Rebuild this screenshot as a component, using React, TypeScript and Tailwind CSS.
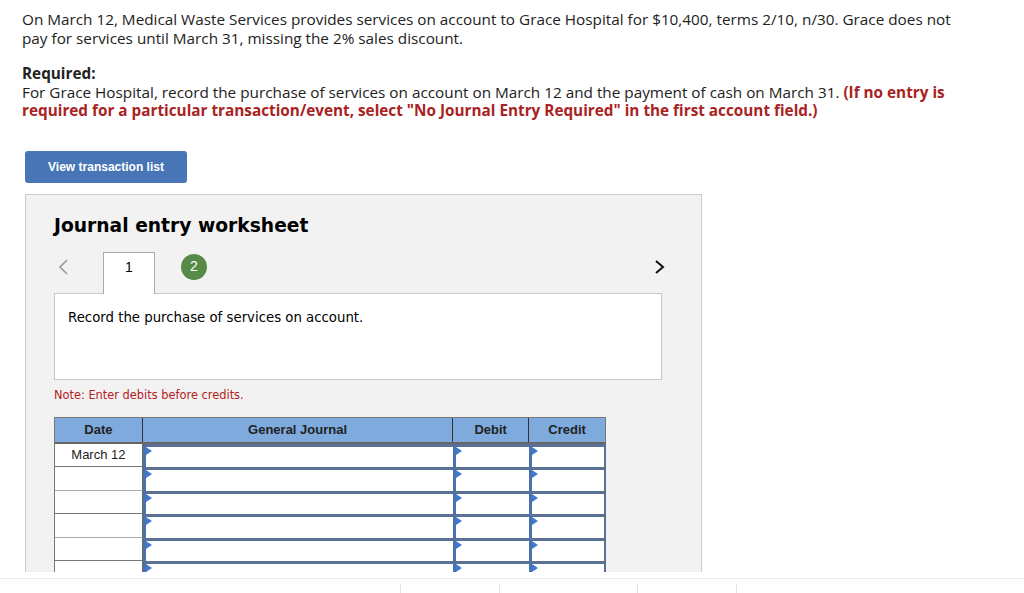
import React from "react";

const Marker = () => (
  <svg className="absolute left-0 top-0" width="6" height="8" viewBox="0 0 6 8">
    <polygon points="0,0 6,4 0,8" fill="#3f7ad0" />
  </svg>
);

const InputCell = ({ w }: { w: string }) => (
  <div className={`${w} relative h-full border-t-[3px] border-l-[3px] border-t-[#5a7094] border-l-[#4a72ad] bg-white`}>
    <Marker />
  </div>
);

export default function App() {
  const rows = ["March 12", "", "", "", "", ""];
  return (
    <div className="w-[1024px] h-[593px] overflow-hidden bg-white" style={{ fontFamily: "Lato, 'Liberation Sans', sans-serif" }}>
      <div className="h-[572px] overflow-hidden">
        <div className="pl-[22px] pt-[10px] w-[980px] text-[15.3px] leading-[18.5px] text-[#222]" style={{ fontFamily: "'Open Sans', 'Liberation Sans', sans-serif" }}>
          <p>
            On March 12, Medical Waste Services provides services on account to Grace Hospital for $10,400, terms 2/10, n/30. Grace does not pay for services until March 31, missing the 2% sales discount.
          </p>
          <p className="mt-[17px] font-bold">Required:</p>
          <p>
            For Grace Hospital, record the purchase of services on account on March 12 and the payment of cash on March 31.{" "}
            <span className="font-bold text-[#a8231f]">
              (If no entry is required for a particular transaction/event, select "No Journal Entry Required" in the first account field.)
            </span>
          </p>
        </div>

        <div className="pl-[25px] mt-[31px]">
          <button className="w-[162px] h-[32px] rounded-[3px] bg-[#4775b5] text-white text-[12px] font-bold" style={{ fontFamily: "'Liberation Sans', Arial, sans-serif" }}>
            View transaction list
          </button>
        </div>

        <div className="ml-[25px] mt-[11px] w-[677px] h-[400px] bg-[#f2f2f2] border border-[#cccccc] pl-[28px] pr-[39px]" style={{ fontFamily: "'DejaVu Sans', Verdana, sans-serif" }}>
          <h2 className="pt-[19px] text-[18.7px] font-bold text-black leading-[24px]">Journal entry worksheet</h2>

          <div className="mt-[14px] flex items-start h-[41px] relative">
            <div className="w-[49px] h-[30px] flex items-center pl-[3px]">
              <svg width="12" height="16" viewBox="0 0 12 16"><polyline points="10,1 3,8 10,15" fill="none" stroke="#9a9a9a" strokeWidth="1.6" /></svg>
            </div>
            <div className="relative z-10 w-[52px] h-[42px] bg-white border border-b-0 border-[#aaaaaa] flex justify-center pt-[6px] text-[14px] leading-[16px] text-black" style={{ fontFamily: "'Liberation Sans', Arial, sans-serif" }}>
              1
            </div>
            <div className="h-[30px] flex items-center ml-[26px]">
              <div className="w-[26px] h-[26px] rounded-full bg-[#578a47] text-white text-[14px] flex items-center justify-center" style={{ fontFamily: "'Liberation Sans', Arial, sans-serif" }}>
                2
              </div>
            </div>
            <div className="flex-1" />
            <div className="h-[30px] flex items-center -mr-[4px]">
              <svg width="12" height="16" viewBox="0 0 12 16"><polyline points="2,2 9,8 2,14" fill="none" stroke="#111" strokeWidth="2" /></svg>
            </div>
          </div>

          <div className="w-[608px] h-[87px] bg-white border border-[#c8c8c8] pl-[13px] pt-[14px] text-[13.3px] text-black">
            Record the purchase of services on account.
          </div>

          <p className="mt-[7px] text-[11.4px] text-[#b22222]">Note: Enter debits before credits.</p>

          <div className="mt-[13px] w-[552px] border-l border-t border-[#777]" style={{ fontFamily: "'Liberation Sans', Arial, sans-serif" }}>
            <div className="flex h-[26px] bg-[#7eaade] text-[13px] font-bold text-[#222] border-b-2 border-[#666]">
              <div className="w-[88px] flex items-center justify-center border-r border-[#333]">Date</div>
              <div className="w-[311px] flex items-center justify-center border-r border-[#333]">General Journal</div>
              <div className="w-[76px] flex items-center justify-center border-r border-[#333]">Debit</div>
              <div className="w-[77px] flex items-center justify-center border-r border-[#777]">Credit</div>
            </div>
            {rows.map((d, i) => (
              <div key={i} className="flex h-[23.5px]">
                <div className={`w-[88px] flex items-center justify-center text-[13px] text-[#222] bg-white border-r border-[#666] border-b ${i % 2 === 0 ? "border-b-[#777]" : "border-b-[#aaa]"}`}>
                  {d}
                </div>
                <InputCell w="w-[311px]" />
                <InputCell w="w-[76px]" />
                <div className="w-[77px] relative h-full border-t-[3px] border-l-[3px] border-r-2 border-t-[#5a7094] border-l-[#4a72ad] border-r-[#5a7094] bg-white">
                  <Marker />
                </div>
              </div>
            ))}
          </div>
        </div>
      </div>

      <div className="h-[21px] pt-[6px]">
        <div className="h-px bg-[#ececec]" />
        <div className="relative h-[14px] mt-[5px]">
          <div className="absolute left-[400px] top-0 h-full w-px bg-[#e4e4e4]" />
          <div className="absolute left-[499px] top-0 h-full w-px bg-[#e4e4e4]" />
          <div className="absolute left-[637px] top-0 h-full w-px bg-[#e4e4e4]" />
          <div className="absolute left-[736px] top-0 h-full w-px bg-[#e4e4e4]" />
        </div>
      </div>
    </div>
  );
}
